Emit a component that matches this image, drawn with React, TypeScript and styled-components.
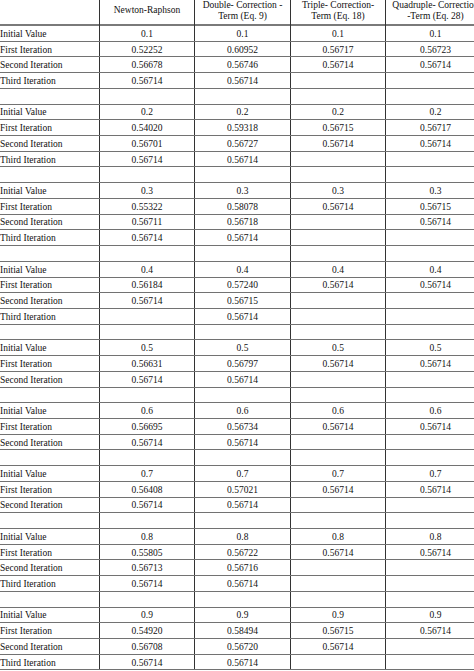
import React from "react";
import styled, { createGlobalStyle } from "styled-components";

const Global = createGlobalStyle`
  html, body { margin: 0; padding: 0; background: #fff; }
  body { overflow: hidden; width: 474px; height: 671px; }
`;

const Table = styled.div`
  width: 486px;
  font-family: "Liberation Serif", "Times New Roman", serif;
  font-size: 9.5px;
  color: #111;
  background: #fff;
`;

const COLS = "100px 95px 96px 95px 100px";

const HeaderRow = styled.div`
  display: grid;
  grid-template-columns: ${COLS};
  height: 26px;
  box-sizing: border-box;
  border-bottom: 2px solid #7a7a7a;
`;

const HeaderCell = styled.div`
  box-sizing: border-box;
  border-right: 1px solid #333;
  display: flex;
  align-items: center;
  justify-content: center;
  text-align: center;
  line-height: 10.5px;
  padding: 0 2px 5px;
  white-space: nowrap;
`;

const Row = styled.div`
  display: grid;
  grid-template-columns: ${COLS};
  height: 15.73px;
  box-sizing: border-box;
  border-bottom: 1px solid #727272;
`;

const Cell = styled.div<{ $label?: boolean }>`
  box-sizing: border-box;
  border-right: 1px solid #333;
  display: flex;
  align-items: center;
  justify-content: ${(p) => (p.$label ? "flex-start" : "center")};
  padding-top: 1px;
  white-space: nowrap;
  overflow: hidden;
`;

type Group = {
  init: string;
  rows: string[][];
};

const groups: Group[] = [
  {
    init: "0.1",
    rows: [
      ["0.52252", "0.60952", "0.56717", "0.56723"],
      ["0.56678", "0.56746", "0.56714", "0.56714"],
      ["0.56714", "0.56714", "", ""],
    ],
  },
  {
    init: "0.2",
    rows: [
      ["0.54020", "0.59318", "0.56715", "0.56717"],
      ["0.56701", "0.56727", "0.56714", "0.56714"],
      ["0.56714", "0.56714", "", ""],
    ],
  },
  {
    init: "0.3",
    rows: [
      ["0.55322", "0.58078", "0.56714", "0.56715"],
      ["0.56711", "0.56718", "", "0.56714"],
      ["0.56714", "0.56714", "", ""],
    ],
  },
  {
    init: "0.4",
    rows: [
      ["0.56184", "0.57240", "0.56714", "0.56714"],
      ["0.56714", "0.56715", "", ""],
      ["", "0.56714", "", ""],
    ],
  },
  {
    init: "0.5",
    rows: [
      ["0.56631", "0.56797", "0.56714", "0.56714"],
      ["0.56714", "0.56714", "", ""],
    ],
  },
  {
    init: "0.6",
    rows: [
      ["0.56695", "0.56734", "0.56714", "0.56714"],
      ["0.56714", "0.56714", "", ""],
    ],
  },
  {
    init: "0.7",
    rows: [
      ["0.56408", "0.57021", "0.56714", "0.56714"],
      ["0.56714", "0.56714", "", ""],
    ],
  },
  {
    init: "0.8",
    rows: [
      ["0.55805", "0.56722", "0.56714", "0.56714"],
      ["0.56713", "0.56716", "", ""],
      ["0.56714", "0.56714", "", ""],
    ],
  },
  {
    init: "0.9",
    rows: [
      ["0.54920", "0.58494", "0.56715", "0.56714"],
      ["0.56708", "0.56720", "0.56714", ""],
      ["0.56714", "0.56714", "", ""],
    ],
  },
];

const labels = ["First Iteration", "Second Iteration", "Third Iteration"];

export default function App() {
  return (
    <>
      <Global />
      <Table>
        <HeaderRow>
          <HeaderCell />
          <HeaderCell>Newton-Raphson</HeaderCell>
          <HeaderCell>
            Double- Correction -<br />
            Term (Eq. 9)
          </HeaderCell>
          <HeaderCell>
            Triple- Correction-
            <br />
            Term (Eq. 18)
          </HeaderCell>
          <HeaderCell>
            Quadruple- Correction
            <br />
            -Term (Eq. 28)
          </HeaderCell>
        </HeaderRow>
        {groups.map((g, gi) => (
          <React.Fragment key={g.init}>
            <Row>
              <Cell $label>Initial Value</Cell>
              <Cell>{g.init}</Cell>
              <Cell>{g.init}</Cell>
              <Cell>{g.init}</Cell>
              <Cell>{g.init}</Cell>
            </Row>
            {g.rows.map((r, ri) => (
              <Row key={ri}>
                <Cell $label>{labels[ri]}</Cell>
                {r.map((v, vi) => (
                  <Cell key={vi}>{v}</Cell>
                ))}
              </Row>
            ))}
            {gi < groups.length - 1 && (
              <Row>
                <Cell $label />
                <Cell />
                <Cell />
                <Cell />
                <Cell />
              </Row>
            )}
          </React.Fragment>
        ))}
      </Table>
    </>
  );
}
